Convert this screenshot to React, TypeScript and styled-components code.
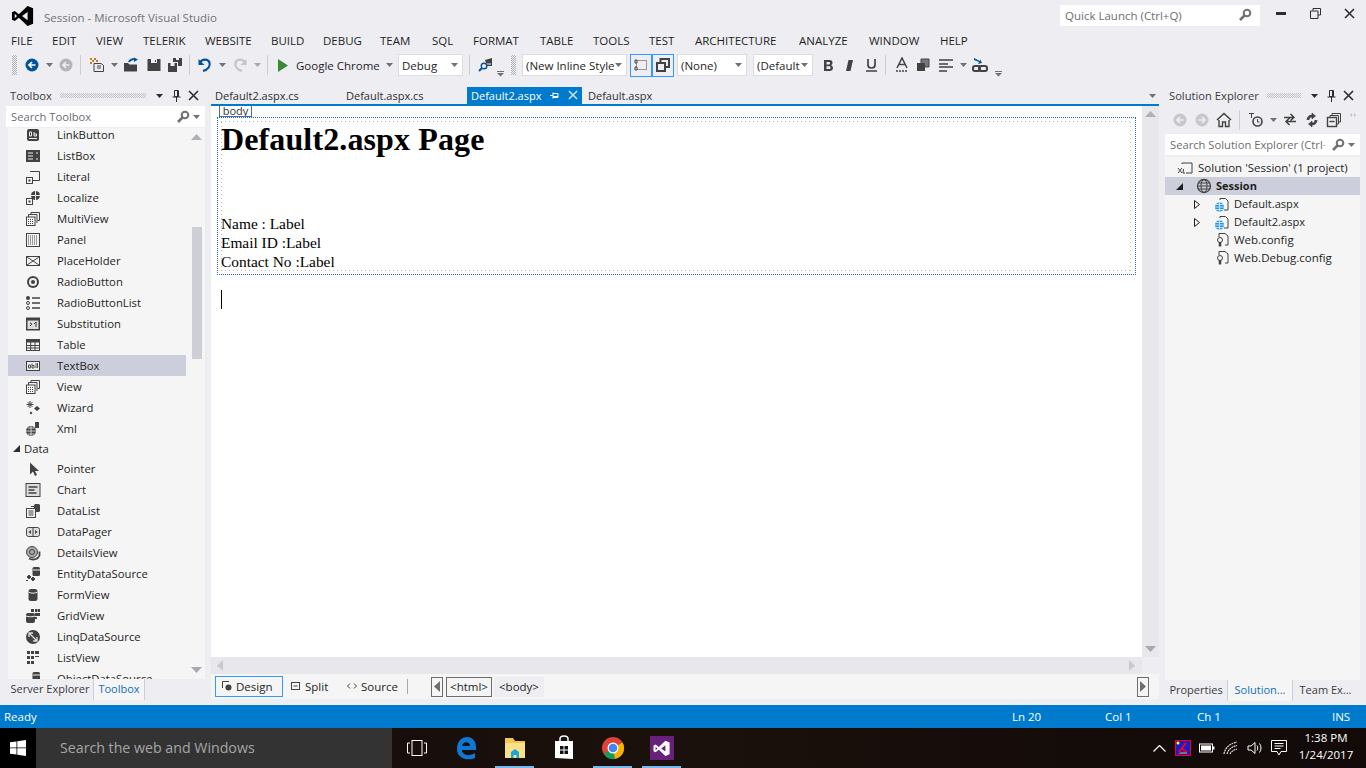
import React from "react";
import styled, { createGlobalStyle } from "styled-components";

const Global = createGlobalStyle`
  html, body { margin: 0; padding: 0; height: 100%; overflow: hidden; background: #eeeef2; }
  body { font-family: "Open Sans", "Noto Sans", sans-serif; font-size: 11.5px; color: #1e1e1e; }
  #root { width: 1366px; height: 768px; }
  * { box-sizing: border-box; }
`;

const Page = styled.div`width:1366px;height:768px;display:flex;flex-direction:column;overflow:hidden;background:#eeeef2;`;

/* title bar */
const TitleBar = styled.div`height:29px;display:flex;align-items:center;flex:none;`;
const LogoSlot = styled.div`width:44px;padding-left:12px;display:flex;align-items:center;height:29px;padding-top:3px;`;
const Title = styled.div`flex:1;color:#717174;font-size:11.5px;padding-top:5px;`;
const QuickLaunch = styled.div`width:200px;height:21px;margin-top:2px;background:#fff;display:flex;align-items:center;justify-content:space-between;padding:0 8px 1px 5px;color:#6d6d70;font-size:11.5px;`;
const WinButtons = styled.div`width:106px;display:flex;height:29px;padding-left:4px;`;
const WinButton = styled.div`width:34px;display:flex;align-items:center;justify-content:center;padding-bottom:2px;`;

/* menu */
const MenuBar = styled.div`height:22px;display:flex;align-items:center;padding-left:11px;flex:none;`;
const MenuItem = styled.div<{ $w: number }>`width:${p => p.$w}px;font-size:11.5px;color:#1e1e1e;white-space:nowrap;`;

/* toolbar */
const Toolbar = styled.div`height:26px;margin-top:1px;display:flex;align-items:center;padding-left:12px;flex:none;`;
const Slot = styled.div<{ $w: number; $ml?: number }>`width:${p => p.$w}px;margin-left:${p => p.$ml || 0}px;height:22px;display:flex;align-items:center;justify-content:center;flex:none;`;
const Grip = styled.div`width:5px;height:20px;background:repeating-conic-gradient(#b4b4b8 0 25%,transparent 0 50%) 0 0/2px 2px;`;
const Sep = styled.div`width:1px;height:20px;background:#cccedb;`;
const RunLabel = styled.div<{ $w: number }>`width:${p => p.$w}px;padding-left:2px;font-size:11.5px;white-space:nowrap;flex:none;`;
const Combo = styled.div<{ $w: number; $ml: number }>`
  width:${p => p.$w}px;margin-left:${p => p.$ml}px;height:22px;flex:none;background:#fff;border:1px solid #dcdce4;
  display:flex;align-items:center;justify-content:space-between;padding:0 4px 0 3px;font-size:11.5px;white-space:nowrap;overflow:hidden;
`;
const ComboText = styled.span`overflow:hidden;flex:1;margin-right:1px;`;
const ToggleBtn = styled.div<{ $ml?: number }>`width:22px;height:23px;margin-left:${p => p.$ml || 0}px;border:1px solid #3399ff;display:flex;align-items:center;justify-content:center;flex:none;`;

/* main */
const Main = styled.div`height:618px;margin-top:9px;display:flex;flex:none;`;
const SidePanel = styled.div<{ $w: number; $ml?: number }>`width:${p => p.$w}px;margin-left:${p => p.$ml || 0}px;display:flex;flex-direction:column;flex:none;`;
const PanelHead = styled.div<{ $pl: number }>`height:18px;display:flex;align-items:center;padding:0 3px 1px ${p => p.$pl}px;flex:none;font-size:11.2px;color:#3a3a3d;`;
const HeadDots = styled.div`flex:1;height:5px;margin:0 5px 0 8px;background:repeating-conic-gradient(#c4c4c8 0 25%,transparent 0 50%) 0 0/2px 2px;`;
const HeadBtn = styled.div`width:17px;display:flex;justify-content:center;align-items:center;height:17px;flex:none;`;
const SearchBox = styled.div<{ $ml: number; $w: number; $mt: number }>`
  margin:${p => p.$mt}px 0 0 ${p => p.$ml}px;width:${p => p.$w}px;height:21px;background:#fff;flex:none;display:flex;align-items:center;
  justify-content:space-between;padding:0 5px;color:#6d6d70;font-size:11.2px;white-space:nowrap;overflow:hidden;
`;
const SearchText = styled.span`overflow:hidden;flex:1;margin-right:6px;padding-bottom:1px;`;
const SearchTail = styled.div`display:flex;align-items:center;gap:3px;flex:none;`;
const ListWrap = styled.div`margin-left:8px;width:197px;height:551px;margin-top:1px;background:#f5f5f5;display:flex;overflow:hidden;flex:none;`;
const List = styled.div`width:178px;overflow:hidden;flex:none;`;
const ListInner = styled.div`margin-top:-4px;`;
const ToolRow = styled.div<{ $sel?: boolean }>`height:21px;display:flex;align-items:center;padding-left:17px;background:${p => (p.$sel ? "#cccedb" : "transparent")};font-size:11.3px;color:#1e1e1e;white-space:nowrap;`;
const ToolIcon = styled.div`width:16px;height:16px;margin-right:16px;display:flex;`;
const ToolName = styled.span`padding-bottom:1px;`;
const CatRow = styled.div`height:19px;display:flex;align-items:center;gap:4px;padding-left:5px;font-size:11.3px;`;
const VScroll = styled.div`flex:1;position:relative;display:flex;flex-direction:column;align-items:center;justify-content:space-between;padding:6px 0 6px 2px;`;
const Thumb = styled.div`position:absolute;top:99px;left:6px;width:10px;height:132px;background:#cdced6;`;
const BottomTabs = styled.div<{ $pl: number }>`height:21px;display:flex;padding-left:${p => p.$pl}px;flex:none;align-items:stretch;`;
const BottomTab = styled.div<{ $on?: boolean; $w: number }>`
  width:${p => p.$w}px;display:flex;align-items:center;justify-content:center;font-size:11px;white-space:nowrap;padding-bottom:2px;
  color:${p => (p.$on ? "#0e70c0" : "#3a3a3d")};background:${p => (p.$on ? "#f5f5f5" : "transparent")};
  border-left:1px solid ${p => (p.$on ? "#cccedb" : "transparent")};border-right:1px solid ${p => (p.$on ? "#cccedb" : "transparent")};
`;

/* editor */
const Editor = styled.div`width:948px;margin-left:6px;display:flex;flex-direction:column;flex:none;`;
const TabStrip = styled.div`height:17px;display:flex;align-items:stretch;flex:none;`;
const DocTab = styled.div<{ $w: number; $on?: boolean; $pl?: number }>`
  width:${p => p.$w}px;display:flex;align-items:center;padding:0 0 1px ${p => p.$pl || 4}px;gap:9px;font-size:11px;white-space:nowrap;
  background:${p => (p.$on ? "#007acc" : "transparent")};color:${p => (p.$on ? "#fff" : "#2d2d30")};flex:none;
`;
const TabGlyphs = styled.div`display:flex;align-items:center;gap:9px;`;
const StripEnd = styled.div`margin-left:auto;width:14px;display:flex;align-items:center;justify-content:center;`;
const BlueLine = styled.div`height:2px;background:#007acc;flex:none;`;
const EditBody = styled.div`height:551px;display:flex;flex:none;`;
const Surface = styled.div`width:931px;background:#fff;overflow:hidden;flex:none;font-family:"Liberation Serif","Times New Roman",serif;color:#000;`;
const BodyTag = styled.div`margin-left:8px;width:33px;height:11px;border:1px solid #3d6fc0;border-top:0;font:11px/10px "Open Sans",sans-serif;color:#333;text-align:center;overflow:hidden;`;
const BodyOutline = styled.div`
  position:relative;margin-left:6px;width:919px;height:158px;border:1px dotted #2f62b8;padding:3px 3px 0;
  &::after{
    content:"";position:absolute;inset:3px 4px 3px 3px;pointer-events:none;
    background:
      repeating-linear-gradient(90deg,#b8b8b8 0 1px,transparent 1px 4px) top/100% 1px no-repeat,
      repeating-linear-gradient(90deg,#b8b8b8 0 1px,transparent 1px 4px) bottom/100% 1px no-repeat,
      repeating-linear-gradient(0deg,#b8b8b8 0 1px,transparent 1px 4px) left/1px 100% no-repeat,
      repeating-linear-gradient(0deg,#b8b8b8 0 1px,transparent 1px 4px) right/1px 100% no-repeat;
  }
`;
const H1 = styled.h1`margin:0 0 56px 0;font-size:32px;line-height:37px;font-weight:bold;letter-spacing:.12px;font-family:"Liberation Serif",serif;`;
const LabelLine = styled.div`font-size:15.4px;line-height:19px;`;
const Caret = styled.div`width:1px;height:19px;background:#000;margin:15px 0 0 10px;`;
const EditVScroll = styled.div`width:17px;background:#e8e8ec;display:flex;flex-direction:column;align-items:center;justify-content:space-between;padding:5px 0;flex:none;`;
const HScroll = styled.div`height:17px;width:931px;background:#e8e8ec;display:flex;align-items:center;justify-content:space-between;padding:0 7px 0 6px;flex:none;`;
const DesignBar = styled.div`height:25px;background:#f5f5f5;display:flex;align-items:center;padding-left:4px;flex:none;`;
const ViewBtn = styled.div<{ $w: number; $on?: boolean; $ml?: number }>`
  width:${p => p.$w}px;height:21px;margin-left:${p => p.$ml || 0}px;flex:none;display:flex;align-items:center;gap:4px;padding:0 0 1px 6px;
  border:1px solid ${p => (p.$on ? "#3399ff" : "transparent")};font-size:11.5px;
`;
const BarSep = styled.div`width:1px;height:15px;background:#a8a8a8;margin-left:6px;flex:none;`;
const CrumbArrow = styled.div<{ $ml: number }>`width:12px;height:20px;margin-left:${p => p.$ml}px;border:1px solid #6d6d6d;display:flex;align-items:center;justify-content:center;flex:none;`;
const Crumb = styled.div<{ $w: number; $ml: number; $on?: boolean }>`
  width:${p => p.$w}px;margin-left:${p => p.$ml}px;height:20px;flex:none;display:flex;align-items:center;justify-content:center;font-size:11.5px;padding-bottom:1px;
  border:${p => (p.$on ? "1px solid #6d6d6d" : "0")};background:${p => (p.$on ? "transparent" : "#eeeef2")};
`;

/* solution explorer */
const SolBar = styled.div`height:28px;display:flex;align-items:center;flex:none;margin-top:1px;padding-left:4px;position:relative;`;
const SolDots = styled.div`position:absolute;right:4px;top:5px;width:6px;height:5px;color:#888;font-size:8px;line-height:5px;letter-spacing:1px;`;
const Tree = styled.div`margin-top:2px;height:523px;background:#f5f5f5;padding-top:2px;flex:none;`;
const TreeRow = styled.div<{ $sel?: boolean; $pl: number; $bold?: boolean; $fs: number }>`
  height:18px;display:flex;align-items:center;padding-left:${p => p.$pl}px;white-space:nowrap;font-size:${p => p.$fs}px;
  background:${p => (p.$sel ? "#cccedb" : "transparent")};font-weight:${p => (p.$bold ? 700 : 400)};
`;
const TreeName = styled.span`padding-bottom:1px;`;
const Twist = styled.div`width:20px;display:flex;justify-content:flex-start;flex:none;`;
const TreeIcon = styled.div<{ $mr: number }>`width:16px;height:16px;margin-right:${p => p.$mr}px;flex:none;display:flex;`;

/* status & taskbar */
const StatusBar = styled.div`height:23px;background:#007acc;color:#fff;display:flex;align-items:center;font-size:11.5px;flex:none;padding-left:4px;`;
const StatusCell = styled.div<{ $w: number }>`width:${p => p.$w}px;flex:none;`;
const Taskbar = styled.div`height:40px;flex:none;display:flex;background:linear-gradient(90deg,#140c0a,#1a100c 50%,#110a08);color:#fff;`;
const StartBtn = styled.div`width:36px;background:#000;display:flex;align-items:center;justify-content:center;flex:none;`;
const TaskSearch = styled.div`width:356px;background:#333;color:#a6a6a6;font-size:14.2px;display:flex;align-items:center;padding:0 0 1px 24px;flex:none;`;
const TaskSlot = styled.div<{ $open?: boolean }>`
  width:49px;display:flex;align-items:center;justify-content:center;flex:none;position:relative;
  &::after{content:"";position:absolute;left:5px;right:5px;bottom:0;height:2px;background:${p => (p.$open ? "#76b9ed" : "transparent")};}
`;
const TraySpacer = styled.div`flex:1;`;
const TraySlot = styled.div<{ $w: number }>`width:${p => p.$w}px;display:flex;align-items:center;justify-content:center;flex:none;`;
const Clock = styled.div`width:60px;display:flex;flex-direction:column;align-items:center;justify-content:center;font-size:11.5px;line-height:17px;flex:none;margin:0 10px 0 5px;padding-bottom:4px;`;

const D = "#424242";
const S = (p: { c: React.ReactNode; w?: number; h?: number; vb?: string }) => (
  <svg width={p.w || 16} height={p.h || 16} viewBox={p.vb || "0 0 16 16"} fill="none" style={{ display: "block", flex: "none" }}>{p.c}</svg>
);
const Down = ({ c = "#717171" }: { c?: string }) => <S w={7} h={4} vb="0 0 7 4" c={<path d="M0 0h7L3.500 4z" fill={c} />} />;
const Up = () => <S w={11} h={6} vb="0 0 11 6" c={<path d="M0 6L5.500 0 11 6z" fill="#b0b0b6" />} />;
const DownBig = () => <S w={11} h={6} vb="0 0 11 6" c={<path d="M0 0h11L5.500 6z" fill="#a8a8b0" />} />;
const Overflow = () => <S w={7} h={24} vb="0 0 7 24" c={<><path d="M0 18.500h7" stroke="#717171" /><path d="M0 20h7l-3.500 3.500z" fill="#717171" /></>} />;
const Mag = ({ c = "#717171" }: { c?: string }) => <S w={14} h={14} vb="0 0 14 14" c={<g stroke={c}><circle cx="9" cy="5" r="3.300" strokeWidth="2" /><path d="M6.500 7.500L2 12" strokeWidth="2.600" /></g>} />;
const Close = ({ c = "#2d2d30", s = 11 }: { c?: string; s?: number }) => <S w={s} h={s} vb="0 0 11 11" c={<path d="M1 1l9 9M10 1l-9 9" stroke={c} strokeWidth="1.600" />} />;
const Pin = ({ c = "#2d2d30" }: { c?: string }) => <S w={9} h={12} vb="0 0 9 12" c={<path d="M2.500 .5h4v6h-4zM.5 7h8M4.500 7v5M5.500 1v5" stroke={c} />} />;
const VsLogo = ({ s = 22, c = "#000" }: { s?: number; c?: string }) => (
  <S w={s} h={s} vb="0 0 24 24" c={<path fillRule="evenodd" fill={c} d="M17 1L7.500 10 3 6.500 0 8v8l3 1.500L7.500 14l9.500 9 6-2.500v-17zM17 7.500v9L11 12zM3 9.500L5.500 12 3 14.500z" />} />
);

const entityIcon = <><rect x="7.500" y="1" width="7.500" height="9" rx="1.500" fill={D} /><path d="M8 4h7" stroke="#eee" /><path d="M2 11l2-2 2 2-2 2zM6 13l2-2 2 2-2 2zM1 14.500h2" stroke={D} fill={D} /></>;
const multiIcon = <><path d="M6 3.500V1.500h8.500v8H12.500M3.500 6V3.500H12V12" stroke={D} /><rect x="1.500" y="6" width="8.500" height="8.500" stroke={D} fill="#f5f5f5" /><path d="M3 8.500h5.500M3 10.500h5.500M3 12.500h5.500" stroke={D} strokeDasharray="1 1" /></>;

const tool: Record<string, React.ReactNode> = {
  link: <><rect x="2" y="2" width="12" height="12" rx="2" fill={D} /><path d="M4.500 5v4h2V5h-2M9 5v4h2.500V7H9" stroke="#eee" /><path d="M4 11.500h8" stroke="#eee" /></>,
  listbox: <><rect x="1" y="2" width="14" height="12" fill={D} /><path d="M3 5h5M3 8h5M3 11h5M11 5h2M11 11h2" stroke="#eee" /></>,
  literal: <><path d="M5 2.500h9.500v9H8" stroke={D} /><rect x="1.500" y="8.500" width="6" height="6" stroke={D} fill="#f5f5f5" /><rect x="3.500" y="10.500" width="2" height="2" fill={D} /></>,
  localize: <><circle cx="10.500" cy="5.500" r="4.500" fill={D} /><path d="M6 5.500h9M10.500 1v9" stroke="#eee" /><rect x="1.500" y="8.500" width="6" height="6" stroke={D} fill="#f5f5f5" /><rect x="3.500" y="10.500" width="2" height="2" fill={D} /></>,
  multi: multiIcon,
  panel: <><rect x="1.500" y="1.500" width="13" height="13" stroke={D} /><path d="M3 4h10M3 6h10M3 8h10M3 10h10M3 12h10" stroke={D} strokeDasharray="1 1" /></>,
  holder: <><rect x="1.500" y="3.500" width="13" height="9" stroke={D} /><path d="M2 4l12 8M14 4L2 12" stroke={D} /></>,
  radio: <><circle cx="8" cy="8" r="6" fill={D} /><circle cx="8" cy="8" r="4" fill="#eee" /><circle cx="8" cy="8" r="2" fill={D} /></>,
  radiolist: <><circle cx="3" cy="3" r="2" fill={D} /><circle cx="3" cy="8" r="1.500" stroke={D} /><circle cx="3" cy="13" r="1.500" stroke={D} /><path d="M7 3h8M7 8h8M7 13h8" stroke={D} strokeWidth="1.500" /></>,
  subst: <><rect x="1" y="1.500" width="14" height="13" fill={D} /><rect x="2.500" y="4.500" width="11" height="8.500" fill="#ddd" /><path d="M5 7l2 1-2 2M11 6v5M9 8l2-2" stroke={D} /></>,
  table: <><rect x="1.500" y="2.500" width="13" height="11" stroke={D} /><path d="M1.500 2.500h13v3h-13z" fill={D} /><path d="M2 8.500h12M2 11h12M5.700 5v8M10 5v8" stroke={D} /></>,
  textbox: <><rect x="1.500" y="3.500" width="13" height="9" stroke={D} fill="#eee" /><path d="M3.500 10V7h2v3h-2M7 5.500V10h2V7.500H7M11 5v5M12.500 5v5" stroke={D} strokeWidth=".9" /></>,
  view: multiIcon,
  wizard: <><path d="M5 1v7M1.500 4.500h7M2.500 2l5 5M7.500 2l-5 5" stroke={D} /><path d="M12 6l3 2.500-3 2.500-3-2.500zM6 11.500l1.500 1.500L6 14.500 4.500 13z" fill={D} /></>,
  xml: <><circle cx="6" cy="10" r="5" fill={D} /><path d="M1 10h10M6 5v10M2.500 7h7M2.500 13h7" stroke="#eee" strokeWidth=".8" /><rect x="10" y="1" width="4" height="6" fill={D} /></>,
  pointer: <path d="M5 1.500v12l3-3 2 4.500 2-1-2-4h4z" fill={D} />,
  chart: <><rect x="1" y="1.500" width="14" height="13" fill="#ddd" stroke={D} /><path d="M3.500 5h9M3.500 8h6M3.500 11h8" stroke={D} strokeWidth="1.300" /></>,
  datalist: <><rect x="9" y="1" width="6" height="8" rx="1.500" fill={D} /><path d="M6 3.500h3" stroke={D} /><rect x="1.500" y="5.500" width="9" height="9" stroke={D} fill="#f5f5f5" /><path d="M3.500 8h5M3.500 10h5M3.500 12h5" stroke={D} /></>,
  pager: <><rect x="1.500" y="3.500" width="13" height="9" rx="2" stroke={D} fill="#ddd" /><path d="M8 3.500v9" stroke={D} /><path d="M6 6v4L3.500 8zM10 6v4L12.500 8z" fill={D} /></>,
  details: <><circle cx="7" cy="7" r="5.500" fill="#aaa" stroke={D} /><circle cx="7" cy="7" r="2.500" stroke={D} /><path d="M4 13.500c4 2 9 1 10.500-3V6.500" stroke={D} strokeWidth="1.800" /></>,
  entity: entityIcon,
  form: <><rect x="3.500" y="2" width="9" height="12" rx="2.500" fill={D} /><path d="M3.500 5c2 1.500 7 1.500 9 0" stroke="#eee" /></>,
  grid: <><path d="M6 1h3v3H6zM10 1h2.500v3H10zM13 1h2v3h-2zM10 5h5v3h-5zM10 9h2v2h-2z" fill={D} /><rect x="1" y="5" width="9" height="10" rx="2" fill={D} /><path d="M1 8c2 1 7 1 9 0" stroke="#eee" /></>,
  linq: <><circle cx="8" cy="8" r="7" fill={D} /><path d="M4 4l8 8M4 8V4h4M12 8v4H8" stroke="#ddd" strokeWidth="1.300" /></>,
  listview: <path d="M2 1h3v3H2zM6 1h3v3H6zM10 1h4v3h-4zM2 6h3v3H2zM6 6h3v3H6zM10 6h4v1h-4zM2 11h3v3H2zM6 11h3v3H6z" fill={D} />,
  object: entityIcon,
};

const menus: [string, number][] = [["FILE", 41], ["EDIT", 44], ["VIEW", 47], ["TELERIK", 62], ["WEBSITE", 66], ["BUILD", 52], ["DEBUG", 57], ["TEAM", 52], ["SQL", 41], ["FORMAT", 67], ["TABLE", 53], ["TOOLS", 56], ["TEST", 46], ["ARCHITECTURE", 104], ["ANALYZE", 70], ["WINDOW", 71], ["HELP", 40]];
const toolsA: [string, string][] = [["LinkButton", "link"], ["ListBox", "listbox"], ["Literal", "literal"], ["Localize", "localize"], ["MultiView", "multi"], ["Panel", "panel"], ["PlaceHolder", "holder"], ["RadioButton", "radio"], ["RadioButtonList", "radiolist"], ["Substitution", "subst"], ["Table", "table"], ["TextBox", "textbox"], ["View", "view"], ["Wizard", "wizard"], ["Xml", "xml"]];
const toolsB: [string, string][] = [["Pointer", "pointer"], ["Chart", "chart"], ["DataList", "datalist"], ["DataPager", "pager"], ["DetailsView", "details"], ["EntityDataSource", "entity"], ["FormView", "form"], ["GridView", "grid"], ["LinqDataSource", "linq"], ["ListView", "listview"], ["ObjectDataSource", "object"]];

const PageIcon = ({ web }: { web?: boolean }) => (
  <S c={web ? <><path d="M6 4V2.500h5.500l2.500 2.500v9h-4" stroke={D} /><circle cx="5.500" cy="11" r="4.500" fill="#1c97ea" /><path d="M1 11h9M5.500 6.500v9M2 8.500h7M2 13.500h7" stroke="#f5f5f5" strokeWidth=".8" /></> : <><path d="M5 5V1.500h6l3 2.500v9h-3" stroke={D} /><circle cx="6" cy="8" r="2.500" stroke={D} /><path d="M6 10v4.500" stroke={D} strokeWidth="2.500" /></>} />
);

const Head = ({ label, pl }: { label: string; pl: number }) => (
  <PanelHead $pl={pl}>
    {label}
    <HeadDots />
    <HeadBtn><Down c="#2d2d30" /></HeadBtn>
    <HeadBtn><Pin /></HeadBtn>
    <HeadBtn><Close /></HeadBtn>
  </PanelHead>
);

const Circ = ({ c, dir, fillArrow = "#fff" }: { c: string; dir: "l" | "r"; fillArrow?: string }) => (
  <S w={14} h={14} vb="0 0 14 14" c={<><circle cx="7" cy="7" r="6.500" fill={c} /><path d={dir === "l" ? "M10.500 7h-6M7 4L4 7l3 3" : "M3.500 7h6M7 4l3 3-3 3"} stroke={fillArrow} strokeWidth="1.700" /></>} />
);

export default function App() {
  return (
    <Page>
      <Global />
      <TitleBar>
        <LogoSlot><VsLogo /></LogoSlot>
        <Title>Session - Microsoft Visual Studio</Title>
        <QuickLaunch>Quick Launch (Ctrl+Q)<Mag /></QuickLaunch>
        <WinButtons>
          <WinButton><S w={10} h={3} vb="0 0 10 3" c={<rect width="10" height="3" y="0" fill="#2d2d30" />} /></WinButton>
          <WinButton><S w={11} h={11} vb="0 0 11 11" c={<path d="M3 2.500V.5h7.500v6.500H8M.5 3h7.500v7.500H.5z" stroke="#2d2d30" />} /></WinButton>
          <WinButton><Close /></WinButton>
        </WinButtons>
      </TitleBar>
      <MenuBar>{menus.map(([m, w]) => <MenuItem key={m} $w={w}>{m}</MenuItem>)}</MenuBar>
      <Toolbar>
        <Slot $w={5}><Grip /></Slot>
        <Slot $w={5} />
        <Slot $w={20}><Circ c="#00539c" dir="l" /></Slot>
        <Slot $w={14}><Down /></Slot>
        <Slot $w={20}><Circ c="#b5b5b8" dir="l" fillArrow="#eee" /></Slot>
        <Slot $w={8}><Sep /></Slot>
        <Slot $w={26}><S c={<><path d="M5 6.500h7l2.500 2v6H5z" stroke={D} fill="#eee" /><path d="M8 9h4M8 11h4" stroke={D} /><path d="M1 1h2v2H1zM5 1h2v2H5zM3 3h2v2H3zM7 3h2v2H7zM1 5h2v2H1z" fill="#c27d1a" /></>} /></Slot>
        <Slot $w={8}><Down /></Slot>
        <Slot $w={25}><S c={<><path d="M1 6h4l1.500 1.500h7.500v7H1z" fill={D} /><path d="M6 5c1-2.500 3-3 6-3" stroke="#00539c" strokeWidth="2" /><path d="M11 .5L15 2.500 11 5z" fill="#00539c" /></>} /></Slot>
        <Slot $w={21}><S c={<path fillRule="evenodd" d="M1.500 2h13v12h-13zM5 2v4h6V2zM9 3h1v2H9z" fill={D} />} /></Slot>
        <Slot $w={22}><S c={<path fillRule="evenodd" d="M6 1h9v8h-4V5H6zM9 1v2h3V1zM1 6h9v9H1zM3.500 6v3h4V6z" fill={D} />} /></Slot>
        <Slot $w={6}><Sep /></Slot>
        <Slot $w={25}><S c={<><path d="M3 5.500c2-3.500 8-4 9.500 0 1 3.500-1.500 7-6.500 8.500" stroke="#00539c" strokeWidth="2.200" /><path d="M1.500 2v6h6z" fill="#00539c" /></>} /></Slot>
        <Slot $w={10}><Down /></Slot>
        <Slot $w={25}><S c={<><path d="M13 5.500C11 2 5 1.500 3.500 5.500c-1 3.500 1.500 7 6.500 8.500" stroke="#c4c4c8" strokeWidth="2.200" /><path d="M14.500 2v6h-6z" fill="#c4c4c8" /></>} /></Slot>
        <Slot $w={10}><Down c="#a8a8ac" /></Slot>
        <Slot $w={10}><Sep /></Slot>
        <Slot $w={22}><S w={10} h={13} vb="0 0 10 13" c={<path d="M0 0l10 6.500L0 13z" fill="#388a34" />} /></Slot>
        <RunLabel $w={89}>Google Chrome</RunLabel>
        <Slot $w={12}><Down /></Slot>
        <Combo $w={65} $ml={3}><ComboText>Debug</ComboText><Down /></Combo>
        <Slot $w={12}><Sep /></Slot>
        <Slot $w={21}><S c={<><path d="M7 3l7-2v8H9" fill={D} /><path d="M8 7h5" stroke="#eee" /><circle cx="6" cy="9" r="2.800" stroke="#00539c" strokeWidth="1.400" fill="#eee" /><path d="M4 11l-3 3" stroke="#00539c" strokeWidth="2" /></>} /></Slot>
        <Slot $w={8}><Overflow /></Slot>
        <Slot $w={18}><Grip /></Slot>
        <Combo $w={105} $ml={0}><ComboText>(New Inline Style</ComboText><Down /></Combo>
        <ToggleBtn $ml={3}><S c={<><rect x="3.500" y="3.500" width="10" height="9" stroke={D} strokeDasharray="1 1" /><path d="M2 3h2v3H2zM2 10h2v3H2z" stroke={D} fill="#eee" /></>} /></ToggleBtn>
        <ToggleBtn><S c={<><rect x="5.500" y="2" width="8.500" height="8" stroke={D} strokeWidth="2" /><rect x="2" y="6" width="8" height="8" stroke={D} strokeWidth="2" fill="#eeeef2" /></>} /></ToggleBtn>
        <Combo $w={70} $ml={3}><ComboText>(None)</ComboText><Down /></Combo>
        <Combo $w={60} $ml={6}><ComboText>(Default</ComboText><Down /></Combo>
        <Slot $w={22} $ml={4}><S w={9} h={11} vb="0 0 9 11" c={<path fillRule="evenodd" fill={D} d="M0 0h5.500C8 0 8.500 1.500 8.500 2.800c0 1-.5 2-1.500 2.400C8 5.500 9 6.500 9 8c0 2-1.500 3-3.500 3H0zM2.500 2v2.500h2.500c.8 0 1-.6 1-1.200S5.800 2 5 2zM2.500 6.300V9h2.800c.8 0 1.200-.6 1.200-1.300S6 6.300 5.300 6.300z" />} /></Slot>
        <Slot $w={21}><S w={7} h={11} vb="0 0 7 11" c={<path d="M2.500 0H7L4.500 11H0z" fill={D} />} /></Slot>
        <Slot $w={22}><S w={11} h={13} vb="0 0 11 13" c={<path d="M2 0v6c0 2 1.500 3 3.500 3S9 8 9 6V0M0 12h11" stroke={D} strokeWidth="1.700" />} /></Slot>
        <Slot $w={6}><Sep /></Slot>
        <Slot $w={27}><S w={12} h={16} vb="0 0 12 16" c={<><path d="M1 11L6 1l5 10M3 7.500h6" stroke={D} strokeWidth="1.500" /><path d="M0 14h12" stroke={D} strokeWidth="1.500" strokeDasharray="2 1" /></>} /></Slot>
        <Slot $w={16}><S w={14} h={14} vb="0 0 14 14" c={<><path d="M5 1h8v8H5z" fill="#777" stroke={D} /><path d="M1 5h8v8H1z" fill={D} /></>} /></Slot>
        <Slot $w={30}><S w={14} h={13} vb="0 0 14 13" c={<path d="M0 1h14M0 5h9M0 8h14M0 12h8" stroke={D} strokeWidth="1.600" />} /></Slot>
        <Slot $w={4}><Down /></Slot>
        <Slot $w={30}><S c={<><path d="M2 1l6 3v-2l2 4-4 1 1-2-5-2z" fill="#00539c" /><rect x="1" y="9" width="7" height="5" rx="2" stroke={D} strokeWidth="2" /><rect x="7" y="9" width="8" height="5" rx="2" stroke={D} strokeWidth="2" /></>} /></Slot>
        <Slot $w={6}><Overflow /></Slot>
      </Toolbar>
      <Main>
        <SidePanel $w={205}>
          <Head label="Toolbox" pl={10} />
          <SearchBox $ml={6} $w={199} $mt={1}>
            <SearchText>Search Toolbox</SearchText>
            <SearchTail><Mag /><Down /></SearchTail>
          </SearchBox>
          <ListWrap>
            <List>
              <ListInner>
                {toolsA.map(([n, i]) => (
                  <ToolRow key={n} $sel={n === "TextBox"}><ToolIcon><S c={tool[i]} /></ToolIcon><ToolName>{n}</ToolName></ToolRow>
                ))}
                <CatRow><S w={7} h={7} vb="0 0 7 7" c={<path d="M7 0v7H0z" fill="#2d2d30" />} /><ToolName>Data</ToolName></CatRow>
                {toolsB.map(([n, i]) => (
                  <ToolRow key={n}><ToolIcon><S c={tool[i]} /></ToolIcon><ToolName>{n}</ToolName></ToolRow>
                ))}
              </ListInner>
            </List>
            <VScroll><Up /><Thumb /><DownBig /></VScroll>
          </ListWrap>
          <BottomTabs $pl={7}>
            <BottomTab $w={86}>Server Explorer</BottomTab>
            <BottomTab $w={52} $on>Toolbox</BottomTab>
          </BottomTabs>
        </SidePanel>
        <Editor>
          <TabStrip>
            <DocTab $w={131}>Default2.aspx.cs</DocTab>
            <DocTab $w={125}>Default.aspx.cs</DocTab>
            <DocTab $w={115} $on>Default2.aspx
              <TabGlyphs>
                <S w={9} h={9} vb="0 0 9 9" c={<path d="M0 4.500h3M3 1.500v6M3 2.500h5v4H3M3 5.500h5" stroke="#fff" />} />
                <Close c="#d0e8f8" s={10} />
              </TabGlyphs>
            </DocTab>
            <DocTab $w={80} $pl={6}>Default.aspx</DocTab>
            <StripEnd><Down /></StripEnd>
          </TabStrip>
          <BlueLine />
          <EditBody>
            <Surface>
              <BodyTag>body</BodyTag>
              <BodyOutline>
                <H1>Default2.aspx Page</H1>
                <LabelLine>Name : Label</LabelLine>
                <LabelLine>Email ID :Label</LabelLine>
                <LabelLine>Contact No :Label</LabelLine>
              </BodyOutline>
              <Caret />
            </Surface>
            <EditVScroll><Up /><DownBig /></EditVScroll>
          </EditBody>
          <HScroll>
            <S w={6} h={11} vb="0 0 6 11" c={<path d="M6 0v11L0 5.500z" fill="#c8c8cf" />} />
            <S w={6} h={11} vb="0 0 6 11" c={<path d="M0 0v11l6-5.500z" fill="#c8c8cf" />} />
          </HScroll>
          <DesignBar>
            <ViewBtn $w={68} $on><S w={10} h={10} vb="0 0 10 10" c={<><path d="M.5 7V.5H7" stroke={D} /><circle cx="6.500" cy="6.500" r="3" fill={D} /></>} />Design</ViewBtn>
            <ViewBtn $w={56} $ml={1}><S w={10} h={10} vb="0 0 10 10" c={<><rect x=".5" y="1.500" width="8" height="7" stroke={D} /><path d="M2.500 5h4" stroke={D} /></>} />Split</ViewBtn>
            <ViewBtn $w={61}><S w={10} h={10} vb="0 0 10 10" c={<path d="M3 2.500L.5 5 3 7.500M7 2.500L9.500 5 7 7.500" stroke={D} />} />Source</ViewBtn>
            <BarSep />
            <CrumbArrow $ml={23}><S w={6} h={11} vb="0 0 6 11" c={<path d="M6 0v11L0 5.500z" fill="#6d6d6d" />} /></CrumbArrow>
            <Crumb $w={46} $ml={3} $on>&lt;html&gt;</Crumb>
            <Crumb $w={50} $ml={2}>&lt;body&gt;</Crumb>
            <CrumbArrow $ml={593}><S w={6} h={11} vb="0 0 6 11" c={<path d="M0 0v11l6-5.500z" fill="#6d6d6d" />} /></CrumbArrow>
          </DesignBar>
        </Editor>
        <SidePanel $w={195} $ml={6}>
          <Head label="Solution Explorer" pl={4} />
          <SolBar>
            <Slot $w={22}><Circ c="#c8c8cc" dir="l" fillArrow="#eee" /></Slot>
            <Slot $w={22}><Circ c="#c8c8cc" dir="r" fillArrow="#eee" /></Slot>
            <Slot $w={22}><S c={<><path d="M1 8l7-6.500L15 8" stroke={D} strokeWidth="1.600" /><path d="M3 8v6.500h3.500V10h3v4.500H13V8" stroke={D} strokeWidth="1.400" /></>} /></Slot>
            <Slot $w={8}><Sep /></Slot>
            <Slot $w={26}><S c={<><circle cx="9.500" cy="9.500" r="4.500" stroke={D} strokeWidth="1.600" /><path d="M9.500 7v3h2M1 1.500h5M3.500 1.500V6" stroke={D} /></>} /></Slot>
            <Slot $w={8}><Down /></Slot>
            <Slot $w={26}><S c={<path d="M2 6h9M8.500 2.500L12 6l-3.500 3M14 10H5M7.500 6.500L4 10l3.500 3.500" stroke={D} strokeWidth="1.500" transform="translate(0 -.5)" />} /></Slot>
            <Slot $w={18}><S c={<path d="M3 8c0-3 2-5 5-5v-2l3.500 3L8 7V5C6 5 5 6.500 5 8M13 8c0 3-2 5-5 5v2l-3.500-3L8 9v2c2 0 3-1.500 3-3" fill={D} stroke={D} strokeWidth=".6" />} /></Slot>
            <Slot $w={26}><S c={<><path d="M6 3V1.500h8.500V10H13" stroke={D} /><path d="M4 5V3.500h8.500V12H11" stroke={D} /><rect x="1.500" y="5.500" width="9" height="9" stroke={D} strokeWidth="1.400" /><path d="M3.500 9.500h5" stroke={D} strokeWidth="1.400" /></>} /></Slot>
            <SolDots>››</SolDots>
          </SolBar>
          <SearchBox $ml={0} $w={195} $mt={0}>
            <SearchText>Search Solution Explorer (Ctrl+;)</SearchText>
            <SearchTail><Mag /><Down /></SearchTail>
          </SearchBox>
          <Tree>
            <TreeRow $pl={12} $fs={11.5}>
              <TreeIcon $mr={5}><S c={<><path d="M5 4V3h10v10H9" stroke={D} /><path d="M1 8l4 5M5 8l-4 5M6.500 9l-.5 4h2" stroke={D} /></>} /></TreeIcon><TreeName>Solution 'Session' (1 project)</TreeName>
            </TreeRow>
            <TreeRow $pl={11} $sel $bold $fs={11}>
              <Twist><S w={7} h={7} vb="0 0 7 7" c={<path d="M7 0v7H0z" fill="#1e1e1e" />} /></Twist>
              <TreeIcon $mr={4}><S c={<><circle cx="8" cy="8" r="6.500" stroke={D} strokeWidth="1.300" /><ellipse cx="8" cy="8" rx="3" ry="6.500" stroke={D} /><path d="M1.500 8h13M2.500 5h11M2.500 11h11" stroke={D} /></>} /></TreeIcon><TreeName>Session</TreeName>
            </TreeRow>
            {["Default.aspx", "Default2.aspx"].map(n => (
              <TreeRow key={n} $pl={29} $fs={11.1}>
                <Twist><S w={6} h={9} vb="0 0 6 9" c={<path d="M.5.500v8l5-4z" stroke="#1e1e1e" />} /></Twist>
                <TreeIcon $mr={4}><PageIcon web /></TreeIcon><TreeName>{n}</TreeName>
              </TreeRow>
            ))}
            {["Web.config", "Web.Debug.config"].map(n => (
              <TreeRow key={n} $pl={49} $fs={11.5}>
                <TreeIcon $mr={4}><PageIcon /></TreeIcon><TreeName>{n}</TreeName>
              </TreeRow>
            ))}
          </Tree>
          <BottomTabs $pl={0}>
            <BottomTab $w={62}>Properties</BottomTab>
            <BottomTab $w={66} $on>Solution...</BottomTab>
            <BottomTab $w={65}>Team Ex...</BottomTab>
          </BottomTabs>
        </SidePanel>
      </Main>
      <StatusBar>
        <StatusCell $w={1008}>Ready</StatusCell>
        <StatusCell $w={93}>Ln 20</StatusCell>
        <StatusCell $w={92}>Col 1</StatusCell>
        <StatusCell $w={135}>Ch 1</StatusCell>
        <StatusCell $w={30}>INS</StatusCell>
      </StatusBar>
      <Taskbar>
        <StartBtn><S vb="0 0 16 16" c={<path d="M0 2.300l6.500-.9v6.100H0zM7.300 1.300L16 0v7.500H7.300zM0 8.300h6.500v6.200L0 13.700zM7.300 8.300H16V16l-8.700-1.300z" fill="#fff" />} /></StartBtn>
        <TaskSearch>Search the web and Windows</TaskSearch>
        <TaskSlot><S w={20} h={16} vb="0 0 20 16" c={<><rect x="5" y=".5" width="10" height="15" stroke="#fff" /><path d="M3 3H.5v10H3M17 3h2.500v10H17" stroke="#fff" /></>} /></TaskSlot>
        <TaskSlot><S w={22} h={24} vb="0 0 22 24" c={<path d="M2 13C2 5 7 1 12 1c6 0 9 5 9 10v3H7c0 5 7 7 13 3v5c-7 3-18 1-18-9zM7 10h8c0-5-7-5-8 0z" fill="#0f78d4" fillRule="evenodd" />} /></TaskSlot>
        <TaskSlot $open><S w={22} h={24} vb="0 0 22 24" c={<><path d="M1 2h8l2 3h10v17H1z" fill="#f5c74e" /><path d="M1 7h20v15H1z" fill="#fbe08a" /><path d="M7 22v-6l4-3 4 3v6h-2.500v-3h-3v3z" fill="#1aa6d6" /></>} /></TaskSlot>
        <TaskSlot><S w={20} h={26} vb="0 0 20 26" c={<><path d="M6 6V4c0-4 8-4 8 0v2" stroke="#fff" strokeWidth="1.500" /><path d="M1 6h18v18l-18-1z" fill="#fff" /><path d="M6 11h3.500v3.500H6zM10.500 11H14v3.500h-3.500zM6 15.500h3.500V19H6zM10.500 15.500H14V19h-3.500z" fill="#111" /></>} /></TaskSlot>
        <TaskSlot $open><S w={24} h={24} vb="0 0 24 24" c={<><circle cx="12" cy="12" r="11" fill="#db4437" /><path d="M12 12L3 18a11 11 0 0 0 11 5z" fill="#0f9d58" /><path d="M12 12l9.500-5.500A11 11 0 0 1 14 23z" fill="#f4b400" /><circle cx="12" cy="12" r="5.500" fill="#fff" /><circle cx="12" cy="12" r="4.300" fill="#4285f4" /></>} /></TaskSlot>
        <TaskSlot $open><S w={24} h={24} vb="0 0 24 24" c={<><rect width="24" height="24" fill="#68217a" /><g transform="translate(3.500 4) scale(.7)"><path fillRule="evenodd" fill="#fff" d="M17 1L7.500 10 3 6.500 0 8v8l3 1.500L7.500 14l9.500 9 6-2.500v-17zM17 7.500v9L11 12zM3 9.500L5.500 12 3 14.500z" /></g></>} /></TaskSlot>
        <TraySpacer />
        <TraySlot $w={24}><S w={13} h={7} vb="0 0 13 7" c={<path d="M.5 6.500l6-6 6 6" stroke="#fff" strokeWidth="1.200" />} /></TraySlot>
        <TraySlot $w={24}><S c={<><rect x=".5" y=".5" width="15" height="15" fill="#1a1ad0" stroke="#f00" /><path d="M4 12L11 3M7 9l5 3" stroke="#f00" strokeWidth="2" /><circle cx="3" cy="3" r="1.500" fill="#ff0" /><path d="M3 14h9v-2H6z" fill="#777" /></>} /></TraySlot>
        <TraySlot $w={24}><S c={<><rect x=".5" y="4" width="13" height="8" stroke="#fff" /><rect x="2" y="5.500" width="10" height="5" fill="#fff" /><rect x="14" y="6.500" width="1.500" height="3" fill="#fff" /></>} /></TraySlot>
        <TraySlot $w={24}><S c={<path d="M1 14C2 8 6 4 14 2M4 14c1-4 4-7 10-8.500M7 14c1-2 3-4 7-5" stroke="#ddd" strokeWidth="1.200" strokeDasharray="2 .6" />} /></TraySlot>
        <TraySlot $w={24}><S c={<><path d="M1 6h3l4-3.500v11L4 10H1z" stroke="#fff" /><path d="M10 5.500c1 1.500 1 3.500 0 5M12.500 3.500c2 2.500 2 6.500 0 9" stroke="#fff" /></>} /></TraySlot>
        <TraySlot $w={24}><S w={16} h={18} vb="0 0 16 18" c={<path d="M.5 1.500h15v11H10L8 16l-2-3.500H.5zM3.500 4.500h9M3.500 7h9M3.500 9.500h6" stroke="#fff" />} /></TraySlot>
        <Clock><div>1:38 PM</div><div>1/24/2017</div></Clock>
      </Taskbar>
    </Page>
  );
}
